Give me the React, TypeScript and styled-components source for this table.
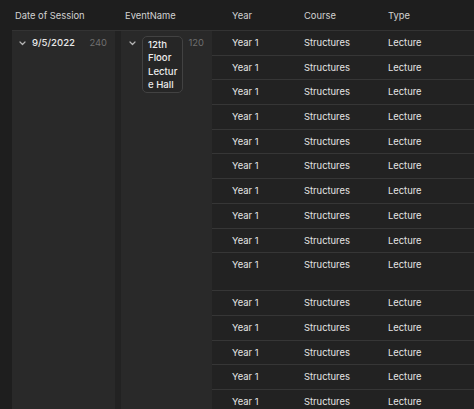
import React from "react";
import styled, { createGlobalStyle } from "styled-components";

const Global = createGlobalStyle`
  html, body { margin: 0; padding: 0; background: #1e1e1e; overflow: hidden; }
  body { font-family: Inter, "Noto Sans", sans-serif; -webkit-font-smoothing: antialiased; }
`;

const Page = styled.div`
  width: 474px;
  height: 409px;
  overflow: hidden;
  background: #1e1e1e;
  padding-left: 12px;
  box-sizing: border-box;
`;

const HeaderRow = styled.div`
  display: flex;
  align-items: center;
  height: 31px;
  box-sizing: border-box;
  border-bottom: 1px solid #333333;
  font-size: 9.4px;
  color: #d2d2d2;
`;

const HeadCell = styled.div<{ $w?: number; $pad?: number }>`
  ${(p) => (p.$w ? `width: ${p.$w}px; flex: none;` : "flex: 1;")}
  padding-left: ${(p) => p.$pad ?? 0}px;
  box-sizing: border-box;
  white-space: nowrap;
`;

const Body = styled.div`
  display: flex;
  align-items: stretch;
  height: 378px;
`;

const GroupPanel = styled.div<{ $w: number }>`
  width: ${(p) => p.$w}px;
  flex: none;
  background: #292929;
`;

const Gap = styled.div`
  width: 6px;
  flex: none;
  background: #222222;
`;

const GroupHead = styled.div`
  display: flex;
  align-items: flex-start;
  padding: 0 8px 0 7px;
  height: 24px;
  line-height: 24px;
  font-size: 9.4px;
`;

const Chevron = styled.svg`
  flex: none;
  width: 7px;
  height: 24px;
  margin-right: 6px;
`;

const GroupValue = styled.span`
  color: #e8e8e8;
  font-weight: 500;
  font-size: 9.6px;
  flex: 1;
`;

const Count = styled.span`
  color: #6f6f6f;
  font-size: 9.4px;
  margin-left: auto;
`;

const Pill = styled.div`
  width: 41px;
  flex: none;
  box-sizing: border-box;
  margin-top: 5px;
  padding: 1px 4px 1px 5px;
  border: 1px solid #424242;
  border-radius: 5px;
  background: #262626;
  color: #ececec;
  font-weight: 500;
  font-size: 9.6px;
  line-height: 13.3px;
  overflow-wrap: anywhere;
`;

const EventHead = styled.div`
  display: flex;
  align-items: flex-start;
  padding: 0 8px 0 8px;
`;

const CountTop = styled(Count)`
  line-height: 24px;
`;

const Rows = styled.div`
  flex: 1;
  display: flex;
  flex-direction: column;
  background: #222222;
`;

const Row = styled.div<{ $tall?: boolean }>`
  display: grid;
  grid-template-columns: 72px 84px 1fr;
  padding-left: 20px;
  height: ${(p) => (p.$tall ? 38 : 24.7)}px;
  flex: none;
  box-sizing: border-box;
  border-bottom: 1px solid #363636;
  line-height: 23.7px;
  font-size: 9.4px;
  color: #e6e6e6;
  white-space: nowrap;
`;

const Cell = styled.div``;

const ChevronIcon = () => (
  <Chevron viewBox="0 0 7 24">
    <path d="M1 11 L3.5 13.5 L6 11" fill="none" stroke="#b5b5b5" strokeWidth="1.2" strokeLinecap="round" strokeLinejoin="round" />
  </Chevron>
);

const rows = Array.from({ length: 15 }, (_, i) => ({ tall: i === 9 }));

export default function App() {
  return (
    <>
      <Global />
      <Page>
        <HeaderRow>
          <HeadCell $w={109} $pad={3}>Date of Session</HeadCell>
          <HeadCell $w={91} $pad={4}>EventName</HeadCell>
          <HeadCell $w={92} $pad={20}>Year</HeadCell>
          <HeadCell $w={84}>Course</HeadCell>
          <HeadCell>Type</HeadCell>
        </HeaderRow>
        <Body>
          <GroupPanel $w={103}>
            <GroupHead>
              <ChevronIcon />
              <GroupValue>9/5/2022</GroupValue>
              <Count>240</Count>
            </GroupHead>
          </GroupPanel>
          <Gap />
          <GroupPanel $w={91}>
            <EventHead>
              <ChevronIcon />
              <Pill>12th Floor Lecture Hall</Pill>
              <CountTop>120</CountTop>
            </EventHead>
          </GroupPanel>
          <Rows>
            {rows.map((r, i) => (
              <Row key={i} $tall={r.tall}>
                <Cell>Year 1</Cell>
                <Cell>Structures</Cell>
                <Cell>Lecture</Cell>
              </Row>
            ))}
          </Rows>
        </Body>
      </Page>
    </>
  );
}
